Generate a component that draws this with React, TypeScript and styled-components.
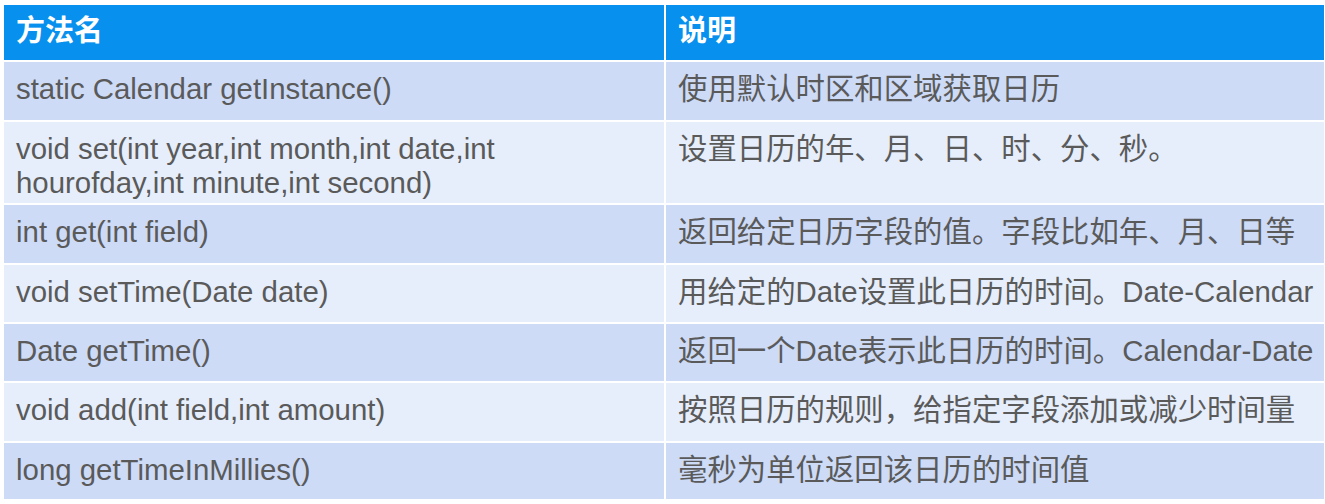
import styled, { createGlobalStyle } from "styled-components";

const GlobalStyle = createGlobalStyle`
  html, body {
    margin: 0;
    padding: 0;
    background: #ffffff;
  }
`;

const Page = styled.div`
  padding: 5px 1px 0 4px;
  font-family: "Liberation Sans", Arial, "Noto Sans CJK SC", sans-serif;
`;

const Table = styled.table`
  width: 100%;
  border-collapse: collapse;
  table-layout: fixed;
`;

const HeadCell = styled.th`
  background: #0790ee;
  color: #ffffff;
  font-weight: bold;
  text-align: left;
  font-size: 29px;
  line-height: 34px;
  height: 56px;
  padding: 0 12px 4px 12px;
  box-sizing: border-box;
  vertical-align: middle;
  border-right: 2px solid #ffffff;
  border-bottom: 2px solid #ffffff;
  &:last-child {
    border-right: none;
  }
`;

const Row = styled.tr<{ $dark: boolean }>`
  background: ${({ $dark }) => ($dark ? "#cddbf7" : "#e6eefb")};
`;

const Cell = styled.td<{ $h: number; $nowrap?: boolean }>`
  color: #5a5a5a;
  font-size: 29.4px;
  line-height: 34px;
  height: ${({ $h }) => $h}px;
  box-sizing: border-box;
  padding: 10px 12px 0 12px;
  vertical-align: top;
  white-space: ${({ $nowrap }) => ($nowrap ? "nowrap" : "normal")};
  overflow: hidden;
  border-right: 2px solid #ffffff;
  border-bottom: 2px solid #ffffff;
  &:last-child {
    border-right: none;
    padding-right: 0;
  }
`;

const rows = [
  { method: "static Calendar getInstance()", desc: "使用默认时区和区域获取日历", h: 60 },
  {
    method: "void set(int year,int month,int date,int hourofday,int minute,int second)",
    desc: "设置日历的年、月、日、时、分、秒。",
    h: 83,
  },
  { method: "int get(int field)", desc: "返回给定日历字段的值。字段比如年、月、日等", h: 60 },
  { method: "void setTime(Date date)", desc: "用给定的Date设置此日历的时间。Date-Calendar", h: 59 },
  { method: "Date getTime()", desc: "返回一个Date表示此日历的时间。Calendar-Date", h: 59 },
  { method: "void add(int field,int amount)", desc: "按照日历的规则，给指定字段添加或减少时间量", h: 60 },
  { method: "long getTimeInMillies()", desc: "毫秒为单位返回该日历的时间值", h: 58 },
];

export default function App() {
  return (
    <>
      <GlobalStyle />
      <Page>
        <Table>
          <colgroup>
            <col style={{ width: 661 }} />
            <col />
          </colgroup>
          <thead>
            <tr>
              <HeadCell>方法名</HeadCell>
              <HeadCell>说明</HeadCell>
            </tr>
          </thead>
          <tbody>
            {rows.map((r, i) => (
              <Row key={r.method} $dark={i % 2 === 0}>
                <Cell $h={r.h}>{r.method}</Cell>
                <Cell $h={r.h} $nowrap>
                  {r.desc}
                </Cell>
              </Row>
            ))}
          </tbody>
        </Table>
      </Page>
    </>
  );
}
